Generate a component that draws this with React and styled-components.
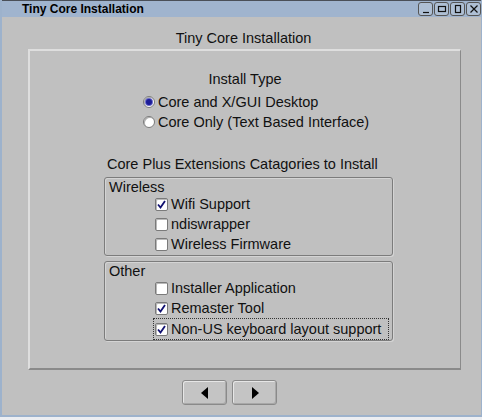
import React from "react";
import styled, { createGlobalStyle } from "styled-components";

const Global = createGlobalStyle`
  html, body { margin: 0; padding: 0; background: #eceef2; }
  body { font-family: "Liberation Sans", Arial, sans-serif; }
`;

const Window = styled.div`
  width: 482px;
  height: 417px;
  box-sizing: border-box;
  background: #c0c0c0;
  border-left: 2px solid #9db2cc;
  border-right: 1px solid #9db2cc;
  border-bottom: 2px solid #9db2cc;
  display: flex;
  flex-direction: column;
  color: #111;
`;

const TitleBar = styled.div`
  height: 17px;
  background: #a0b4ce;
  border-top: 1px solid #4a4f58;
  display: flex;
  align-items: center;
  padding-left: 20px;
  padding-right: 0;
  box-sizing: border-box;
  font-size: 12px;
  font-weight: bold;
  color: #000;
`;

const TitleText = styled.span`
  flex: 1;
`;

const WinButtons = styled.div`
  display: flex;
  gap: 1px;
`;

const WinButton = styled.div`
  width: 15px;
  height: 14px;
  box-sizing: border-box;
  border: 1px solid #555;
  border-radius: 3px;
  background: #aebfd4;
  display: flex;
  align-items: center;
  justify-content: center;
`;

const Heading = styled.div`
  text-align: center;
  font-size: 14.5px;
  height: 22px;
  line-height: 22px;
  padding-top: 10px;
  padding-left: 4px;
`;

const Panel = styled.div`
  margin: 0 20px 0 26px;
  height: 321px;
  box-sizing: border-box;
  border-top: 2px solid #dedede;
  border-left: 2px solid #dedede;
  border-right: 1px solid #8a8a8a;
  border-bottom: 2px solid #8a8a8a;
  display: flex;
  flex-direction: column;
  padding-top: 18px;
  font-size: 14.5px;
`;

const Label = styled.div`
  height: 20px;
  line-height: 20px;
  text-align: ${(p) => p.align || "center"};
  padding-left: ${(p) => p.indent || 0}px;
  margin-top: ${(p) => p.top || 0}px;
  margin-bottom: ${(p) => p.gap || 0}px;
`;

const Row = styled.div`
  height: 20px;
  display: flex;
  align-items: center;
  padding-left: ${(p) => p.indent}px;
  gap: 3px;
`;

const Radio = styled.span`
  width: 12px;
  height: 12px;
  box-sizing: border-box;
  border-radius: 50%;
  border: 1px solid #7a7a7a;
  background: #fff;
  box-shadow: inset 1px 1px 0 #b0b0b0;
  display: flex;
  align-items: center;
  justify-content: center;
  &::after {
    content: "";
    width: 6px;
    height: 6px;
    border-radius: 50%;
    background: ${(p) => (p.checked ? "#1c1c98" : "transparent")};
    box-shadow: ${(p) => (p.checked ? "0 0 0 1px #6a6ac8" : "none")};
  }
`;

const Box = styled.span`
  width: 13px;
  height: 13px;
  box-sizing: border-box;
  border: 1px solid #7a7a7a;
  border-radius: 2px;
  background: #fff;
  box-shadow: inset 1px 1px 0 #b8b8b8;
  display: flex;
  align-items: center;
  justify-content: center;
`;

const Group = styled.div`
  margin-left: 74px;
  width: 289px;
  height: ${(p) => p.h}px;
  margin-bottom: ${(p) => p.gap || 0}px;
  box-sizing: border-box;
  border: 1px solid #7c7c7c;
  border-radius: 3px;
  box-shadow: inset 1px 1px 0 #d4d4d4, 1px 1px 0 #d4d4d4;
  display: flex;
  flex-direction: column;
`;

const GroupLabel = styled.div`
  height: 16px;
  line-height: 18px;
  padding-left: 4px;
`;

const CheckRow = styled.div`
  display: flex;
  align-items: center;
  gap: 3px;
  margin-left: 48px;
  padding-left: 2px;
  box-sizing: border-box;
  width: ${(p) => (p.focus ? "236px" : "auto")};
  height: ${(p) => (p.focus ? "22px" : "20px")};
  outline: ${(p) => (p.focus ? "1px dotted #333" : "none")};
  outline-offset: -1px;
`;

const Footer = styled.div`
  flex: 1;
  display: flex;
  justify-content: center;
  align-items: flex-start;
  gap: 5px;
  padding-top: 10px;
  padding-right: 24px;
`;

const NavButton = styled.button`
  width: 45px;
  height: 25px;
  box-sizing: border-box;
  border: 1px solid #8a8a8a;
  border-radius: 3px;
  background: #c4c4c4;
  box-shadow: inset 1px 1px 0 #e6e6e6, inset -1px -1px 0 #a8a8a8;
  display: flex;
  align-items: center;
  justify-content: center;
  padding: 0;
`;

const Check = () => (
  <svg width="9" height="9" viewBox="0 0 9 9">
    <path d="M1 4.5 L3.5 7.5 L8 1" fill="none" stroke="#101070" strokeWidth="1.8" />
  </svg>
);

const CheckItem = ({ checked, children, focus }) => (
  <CheckRow focus={focus}>
    <Box>{checked && <Check />}</Box>
    {children}
  </CheckRow>
);

export default function App() {
  return (
    <>
      <Global />
      <Window>
        <TitleBar>
          <TitleText>Tiny Core Installation</TitleText>
          <WinButtons>
            <WinButton>
              <svg width="10" height="10"><path d="M2 8.5 H8" stroke="#111" strokeWidth="1.2" /></svg>
            </WinButton>
            <WinButton>
              <svg width="10" height="10"><rect x="1.5" y="2.5" width="7" height="5" fill="none" stroke="#111" strokeWidth="1.2" /></svg>
            </WinButton>
            <WinButton>
              <svg width="10" height="10"><rect x="2.5" y="1.5" width="5" height="7" fill="none" stroke="#111" strokeWidth="1.2" /></svg>
            </WinButton>
            <WinButton>
              <svg width="10" height="10"><path d="M1.5 1.5 L8.5 8.5 M8.5 1.5 L1.5 8.5" stroke="#111" strokeWidth="1.2" /></svg>
            </WinButton>
          </WinButtons>
        </TitleBar>
        <Heading>Tiny Core Installation</Heading>
        <Panel>
          <Label gap={3}>Install Type</Label>
          <Row indent={113}>
            <Radio checked />
            Core and X/GUI Desktop
          </Row>
          <Row indent={113}>
            <Radio />
            Core Only (Text Based Interface)
          </Row>
          <Label align="left" indent={77} top={22} gap={3}>
            Core Plus Extensions Catagories to Install
          </Label>
          <Group h={79} gap={5}>
            <GroupLabel>Wireless</GroupLabel>
            <CheckItem checked>Wifi Support</CheckItem>
            <CheckItem>ndiswrapper</CheckItem>
            <CheckItem>Wireless Firmware</CheckItem>
          </Group>
          <Group h={80}>
            <GroupLabel>Other</GroupLabel>
            <CheckItem>Installer Application</CheckItem>
            <CheckItem checked>Remaster Tool</CheckItem>
            <CheckItem checked focus>Non-US keyboard layout support</CheckItem>
          </Group>
        </Panel>
        <Footer>
          <NavButton>
            <svg width="8" height="12"><path d="M7 0 L0 6 L7 12 Z" fill="#000" /></svg>
          </NavButton>
          <NavButton>
            <svg width="8" height="12"><path d="M1 0 L8 6 L1 12 Z" fill="#000" /></svg>
          </NavButton>
        </Footer>
      </Window>
    </>
  );
}
